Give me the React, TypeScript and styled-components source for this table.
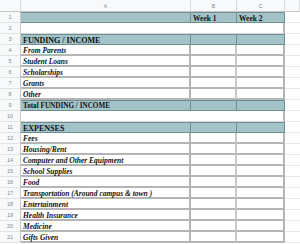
import React from "react";
import styled, { createGlobalStyle } from "styled-components";

const Global = createGlobalStyle`
  html, body { margin: 0; padding: 0; background: #ffffff; }
  body { width: 300px; height: 244px; overflow: hidden; }
`;

type Kind = "head" | "blank" | "section" | "item" | "total";

interface RowData {
  kind: Kind;
  label?: string;
  b?: string;
  c?: string;
}

const rows: RowData[] = [
  { kind: "head", b: "Week 1", c: "Week 2" },
  { kind: "blank" },
  { kind: "section", label: "FUNDING / INCOME" },
  { kind: "item", label: "From Parents" },
  { kind: "item", label: "Student Loans" },
  { kind: "item", label: "Scholarships" },
  { kind: "item", label: "Grants" },
  { kind: "item", label: "Other" },
  { kind: "total", label: "Total FUNDING / INCOME" },
  { kind: "blank" },
  { kind: "section", label: "EXPENSES" },
  { kind: "item", label: "Fees" },
  { kind: "item", label: "Housing/Rent" },
  { kind: "item", label: "Computer and Other Equipment" },
  { kind: "item", label: "School Supplies" },
  { kind: "item", label: "Food" },
  { kind: "item", label: "Transportation (Around campus & town )" },
  { kind: "item", label: "Entertainment" },
  { kind: "item", label: "Health Insurance" },
  { kind: "item", label: "Medicine" },
  { kind: "item", label: "Gifts Given" },
];

const Sheet = styled.div`
  display: grid;
  grid-template-columns: 21px 170px 46px 48px 1fr;
  grid-template-rows: 12px;
  grid-auto-rows: 11px;
  width: 300px;
  font-family: "Liberation Serif", "DejaVu Serif", serif;
`;

const ColHead = styled.div`
  background: #f8f9fa;
  border-bottom: 1px solid #c4c7c5;
  border-right: 1px solid #dadce0;
  box-sizing: border-box;
  color: #80868b;
  font-family: "Liberation Sans", Arial, sans-serif;
  font-size: 5px;
  display: flex;
  align-items: center;
  justify-content: center;
`;

const RowNum = styled.div`
  background: #f8f9fa;
  border-right: 1px solid #c4c7c5;
  border-bottom: 1px solid #e2e3e3;
  box-sizing: border-box;
  color: #80868b;
  font-family: "Liberation Sans", Arial, sans-serif;
  font-size: 5.5px;
  display: flex;
  align-items: center;
  justify-content: center;
`;

const teal = "#a2c4c9";
const tealLine = "#6f8e92";
const grey = "#b5b5b5";

const Cell = styled.div<{ $kind: Kind; $span?: number; $col: "a" | "b" | "c" }>`
  box-sizing: border-box;
  display: flex;
  align-items: center;
  padding-left: 2px;
  padding-top: 1px;
  white-space: nowrap;
  overflow: visible;
  color: #111111;
  grid-column: span ${(p) => p.$span ?? 1};
  ${(p) => {
    switch (p.$kind) {
      case "head":
      case "section":
      case "total":
        return `
          background: ${teal};
          border-top: 1px solid ${tealLine};
          border-bottom: 1px solid ${tealLine};
          border-right: 1px solid ${tealLine};
        `;
      case "blank":
        return `
          background: #ffffff;
          border-right: 2px solid ${grey};
          border-bottom: 1px solid #d8d8d8;
        `;
      default:
        return `
          background: #ffffff;
          border-bottom: 2px solid ${grey};
          border-right: 2px solid ${p.$col === "b" ? "#c8c8c8" : grey};
        `;
    }
  }}
  font-weight: 700;
  font-size: ${(p) =>
    p.$kind === "section" ? "8px" : p.$kind === "total" ? "7.2px" : "7.5px"};
  font-style: ${(p) => (p.$kind === "item" ? "italic" : "normal")};
`;

const Empty = styled.div`
  box-sizing: border-box;
  border-bottom: 1px solid #e8e8e8;
  background: #ffffff;
`;

export default function App() {
  return (
    <>
      <Global />
      <Sheet>
        <ColHead />
        <ColHead>A</ColHead>
        <ColHead>B</ColHead>
        <ColHead>C</ColHead>
        <ColHead />
        {rows.map((r, i) => (
          <React.Fragment key={i}>
            <RowNum>{i + 1}</RowNum>
            {r.kind === "blank" ? (
              <Cell $kind="blank" $col="a" $span={3} />
            ) : (
              <>
                <Cell $kind={r.kind} $col="a">{r.label}</Cell>
                <Cell $kind={r.kind} $col="b">{r.b}</Cell>
                <Cell $kind={r.kind} $col="c">{r.c}</Cell>
              </>
            )}
            <Empty />
          </React.Fragment>
        ))}
      </Sheet>
    </>
  );
}
